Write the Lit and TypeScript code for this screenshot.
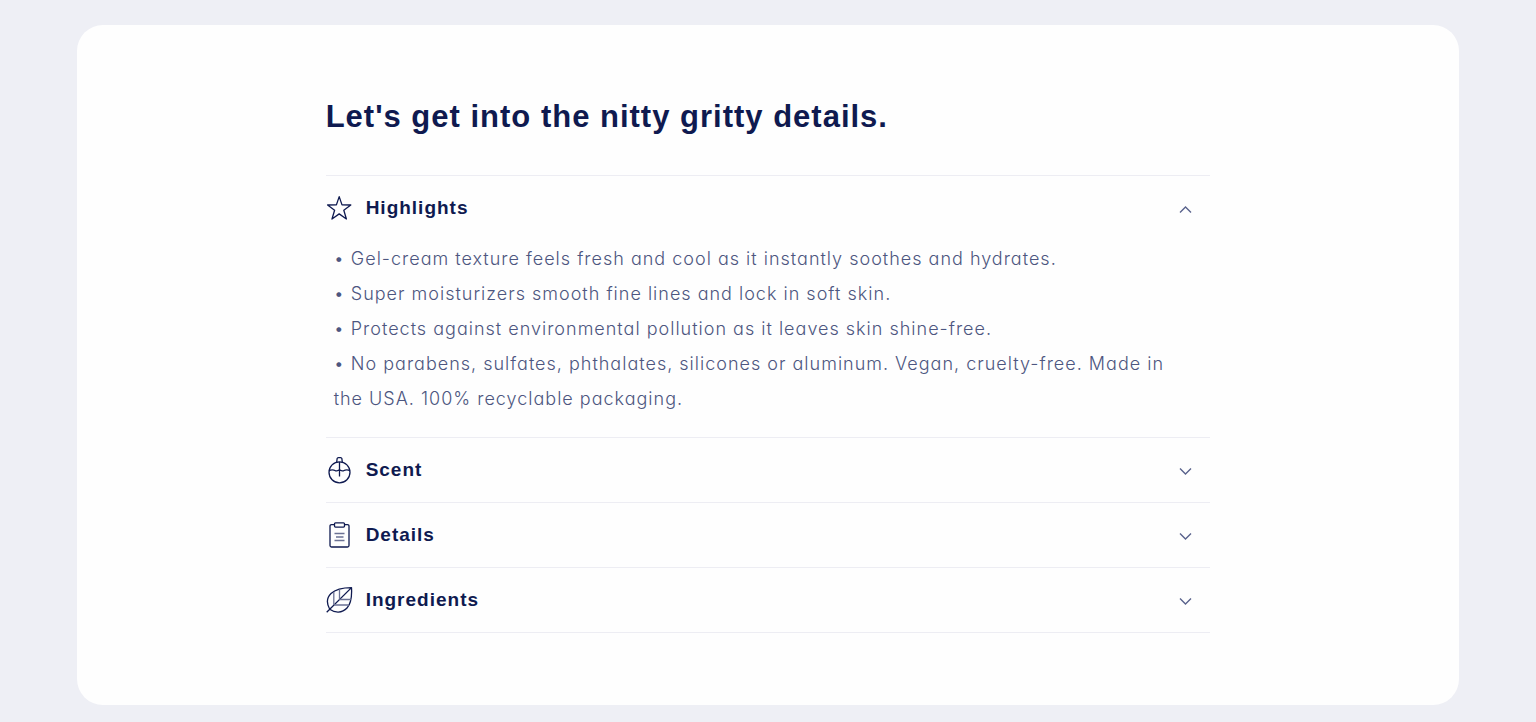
import { LitElement, html, css, svg, TemplateResult } from "lit";
import { customElement, state } from "lit/decorators.js";

const star = svg`<path d="M13.200 2.600 16 10.900 24.800 11 17.800 16.300 20.400 25 13.200 19.900 6 25 8.600 16.300 1.600 11 10.400 10.900Z"/>`;
const scent = svg`<circle cx="13.500" cy="16.300" r="10.500"/><path d="M10.700 6.200 11.100 2.700Q11.300 1.600 12.400 1.600H14.600Q15.700 1.600 15.900 2.700L16.300 6.200M13.500 6V20.500M3 14.800C5 13.600 7.500 13.600 9.500 14.800C11 15.500 12 14 13.500 14C15 14 16 15.500 17.500 14.800C19.500 13.600 22 13.600 24 14.800"/>`;
const details = svg`<path d="M8.500 3.600H5.500Q4 3.600 4 5.100V24.500Q4 26 5.500 26H21.500Q23 26 23 24.500V5.100Q23 3.600 21.500 3.600H18.500"/><rect x="8.500" y="1.800" width="10" height="4.300" rx="1"/><path class="fine" d="M8.500 12.500H18.500M10 16H17.500M8.500 19.500H18.500"/>`;
const leaf = svg`<path d="M.7 26.300 25.500 1.600M25.500 1.600C17 1.600 10 2.800 5 7.500C0 12.500 1.300 19 3.700 23.300C8.500 26.800 16 27.500 21 22C25 17.500 26 10 25.500 1.600Z"/><path class="fine" d="M7.800 6V19M13.500 3.500V13.500M13.500 13.500H24.800M8 19H23"/>`;

interface Section { title: string; icon: TemplateResult; lines: string[] }

const sections: Section[] = [
  { title: "Highlights", icon: star as unknown as TemplateResult, lines: [
    "• Gel-cream texture feels fresh and cool as it instantly soothes and hydrates.",
    "• Super moisturizers smooth fine lines and lock in soft skin.",
    "• Protects against environmental pollution as it leaves skin shine-free.",
    "• No parabens, sulfates, phthalates, silicones or aluminum. Vegan, cruelty-free. Made in the USA. 100% recyclable packaging.",
  ] },
  { title: "Scent", icon: scent as unknown as TemplateResult, lines: [] },
  { title: "Details", icon: details as unknown as TemplateResult, lines: [] },
  { title: "Ingredients", icon: leaf as unknown as TemplateResult, lines: [] },
];

@customElement("app-root")
export class AppRoot extends LitElement {
  @state() private open = 0;

  static styles = css`
    :host { display: block; box-sizing: border-box; min-height: 100vh; padding: 25px 5% 17px; background: #eeeff5; color: #0f1a50; font-family: "Liberation Sans", sans-serif; }
    .card { background: #fefefe; border-radius: 26px; padding: 72px 18%; }
    h1 { margin: 0 0 38px; font-weight: 700; font-size: 31px; line-height: 40px; letter-spacing: 1px; }
    .list { border-top: 1px solid #ededf3; }
    .item { border-bottom: 1px solid #ededf3; }
    h2 { margin: 0; }
    .toggle { display: flex; align-items: center; gap: 12px; width: 100%; height: 64px; padding: 0 18px 0 0; border: 0; background: none; color: inherit; font: 700 19px/28px "Liberation Sans", sans-serif; letter-spacing: 1px; text-align: left; cursor: pointer; }
    .label { flex: 1; }
    .icon { width: 28px; height: 28px; fill: none; stroke: currentColor; stroke-width: 1.3; stroke-linejoin: round; }
    .fine { stroke: #6b7294; }
    .chevron { width: 14px; height: 14px; fill: none; stroke: #59628c; stroke-width: 1.4; }
    .body { padding: 1px 24px 21px 8px; font-family: Inter, sans-serif; font-weight: 300; font-size: 18px; line-height: 35px; letter-spacing: 1px; font-feature-settings: "cv11"; color: #4d5680; }
    .body p { margin: 0; }
  `;

  render() {
    return html`<main class="card">
      <h1>Let's get into the nitty gritty details.</h1>
      <div class="list">${sections.map((s, i) => html`<section class="item">
        <h2><button class="toggle" aria-expanded=${this.open === i} @click=${() => { this.open = this.open === i ? -1 : i; }}>
          <svg class="icon" viewBox="0 0 28 28" aria-hidden="true">${s.icon}</svg>
          <span class="label">${s.title}</span>
          <svg class="chevron" viewBox="0 0 14 14" aria-hidden="true"><path d=${this.open === i ? "M2 11.500 7.500 6 13 11.500" : "M2 5.500 7.500 11 13 5.500"}/></svg>
        </button></h2>
        ${this.open === i && s.lines.length ? html`<div class="body">${s.lines.map((l) => html`<p>${l}</p>`)}</div>` : ""}
      </section>`)}</div>
    </main>`;
  }
}
